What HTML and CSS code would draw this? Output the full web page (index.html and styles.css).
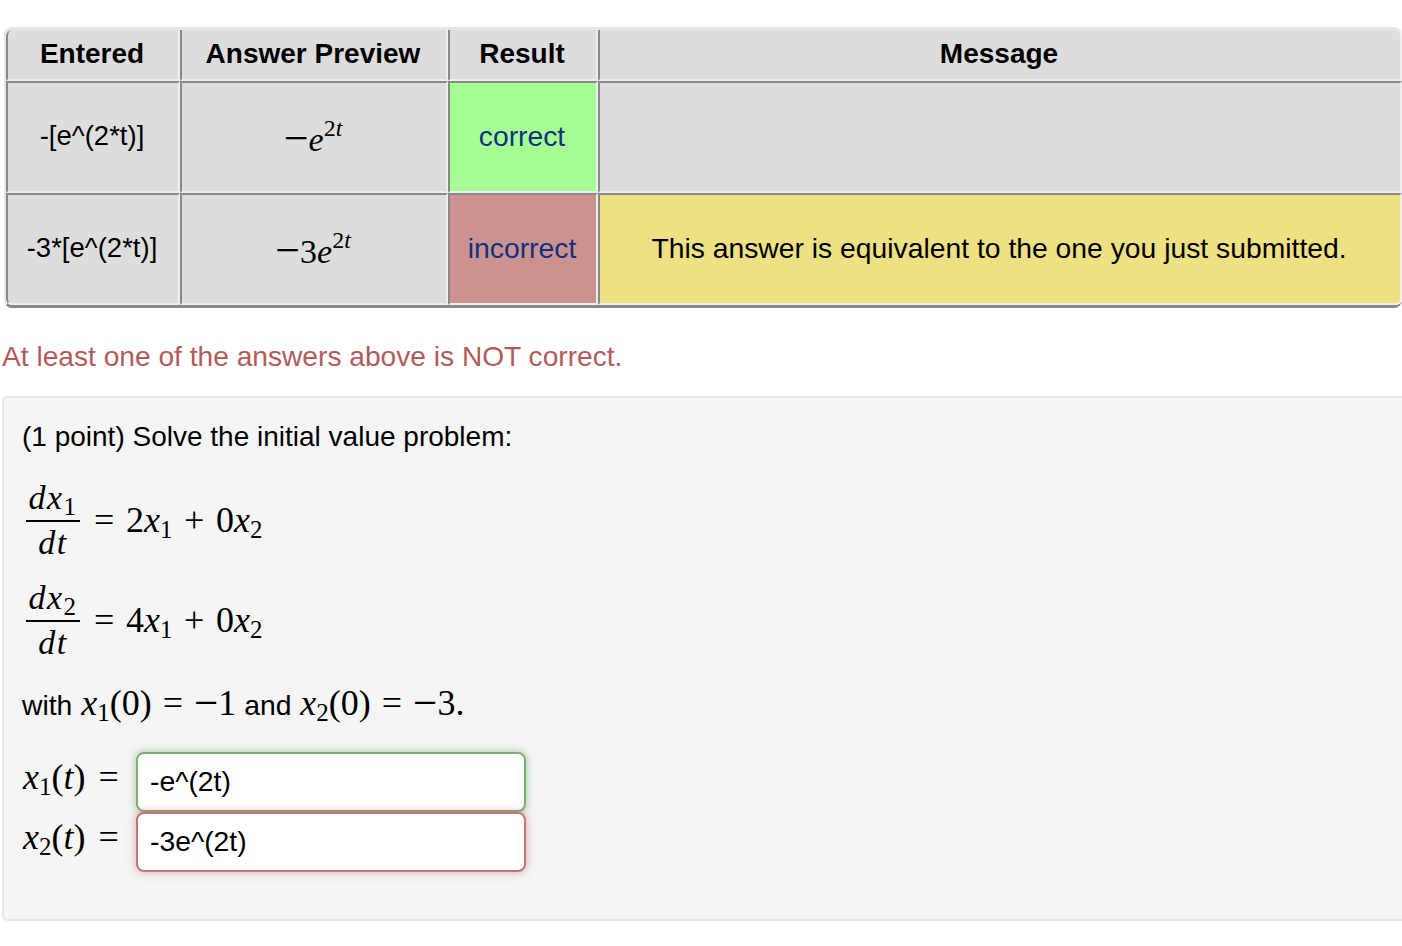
FILE: index.html
```html
<!DOCTYPE html>
<html lang="en">
<head>
<meta charset="utf-8">
<title>Attempt results</title>
<link rel="stylesheet" href="styles.css">
</head>
<body>
<table class="results">
  <thead>
    <tr>
      <th class="col-entered">Entered</th>
      <th class="col-preview">Answer Preview</th>
      <th class="col-result">Result</th>
      <th>Message</th>
    </tr>
  </thead>
  <tbody>
    <tr>
      <td class="entered">-[e^(2*t)]</td>
      <td class="math preview"><span class="minus">−</span><i>e</i><sup><span>2</span><i>t</i></sup></td>
      <td class="correct">correct</td>
      <td></td>
    </tr>
    <tr>
      <td class="entered">-3*[e^(2*t)]</td>
      <td class="math preview"><span class="minus">−</span>3<i>e</i><sup><span>2</span><i>t</i></sup></td>
      <td class="incorrect">incorrect</td>
      <td class="note">This answer is equivalent to the one you just submitted.</td>
    </tr>
  </tbody>
</table>

<p class="summary">At least one of the answers above is NOT correct.</p>

<section class="problem">
  <p class="intro">(1 point) Solve the initial value problem:</p>

  <div class="equation math">
    <span class="fraction">
      <span class="numerator"><i>dx</i><sub>1</sub></span>
      <span class="denominator"><i>dt</i></span>
    </span>
    <span class="rhs">= 2<i>x</i><sub>1</sub> + 0<i>x</i><sub>2</sub></span>
  </div>

  <div class="equation math">
    <span class="fraction">
      <span class="numerator"><i>dx</i><sub>2</sub></span>
      <span class="denominator"><i>dt</i></span>
    </span>
    <span class="rhs">= 4<i>x</i><sub>1</sub> + 0<i>x</i><sub>2</sub></span>
  </div>

  <p class="condition">with <span class="math"><i>x</i><sub>1</sub>(0) = <span class="minus">−</span>1</span> and <span class="math"><i>x</i><sub>2</sub>(0) = <span class="minus">−</span>3.</span></p>

  <div class="answers">
    <label class="answer">
      <span class="answer-label math"><i>x</i><sub>1</sub>(<i>t</i>) =</span>
      <input class="field field-ok" type="text" value="-e^(2t)">
    </label>
    <label class="answer">
      <span class="answer-label math"><i>x</i><sub>2</sub>(<i>t</i>) =</span>
      <input class="field field-bad" type="text" value="-3e^(2t)">
    </label>
  </div>
</section>
</body>
</html>
```

FILE: styles.css
```css
html, body {
  margin: 0;
  padding: 0;
  overflow: hidden;
  height: 946px;
  background: #fff;
}

body {
  font-family: "Liberation Sans", Arial, sans-serif;
  font-size: 28.3px;
  color: #000;
  padding-left: 4px;
  padding-top: 27px;
  box-sizing: border-box;
}

.results {
  width: 1398px;
  border-collapse: separate;
  border-spacing: 0;
  table-layout: fixed;
  border-top: 3px solid #e6e6e6;
  border-left: 2px solid #e6e6e6;
  border-bottom: 3px solid #888;
  border-right: 0;
  border-radius: 8px;
  text-align: center;
}

.results th,
.results td {
  background: #ddd;
  padding: 0 2px 2px 0;
  border-left: 2px solid #888;
  border-top: 2px solid #888;
  border-right: 2px solid #eee;
  border-bottom: 2px solid #eee;
}

.results th {
  height: 47px;
  border-top: 0;
  font-weight: bold;
  font-size: 28px;
}

.results td {
  height: 106px;
}

.results .entered {
  font-size: 27.5px;
}

.results th:first-child { border-top-left-radius: 6px; }
.results tbody tr:last-child td:first-child { border-bottom-left-radius: 6px; }
.results th:last-child { border-top-right-radius: 6px; }
.results tbody tr:last-child td:last-child { border-bottom-right-radius: 6px; }

.col-entered { width: 168px; }
.col-preview { width: 262px; }
.col-result { width: 144px; }

.results .correct {
  background: #a6ff93;
  color: #10307f;
}

.results .incorrect {
  background: #cc9290;
  color: #10307f;
}

.results .note {
  background: #ede184;
}

.math {
  font-family: "Liberation Serif", "Times New Roman", serif;
}

.minus {
  font-size: 1.2em;
  line-height: 0;
  vertical-align: -2px;
}

.results .preview {
  font-size: 34px;
  padding-top: 6px;
  padding-bottom: 0;
  height: 102px;
}

.preview .minus {
  font-size: 1.3em;
}

.preview sup {
  font-size: 24px;
  line-height: 0;
  vertical-align: 15px;
}

.summary {
  margin: 33px 0 0 -2px;
  line-height: 32px;
  font-size: 28.15px;
  color: #b25b5b;
}

.problem {
  margin: 23px 0 0 -2px;
  height: 525px;
  box-sizing: border-box;
  padding: 23px 0 0 18px;
  background: #f5f5f5;
  border: 2px solid #e6e6e6;
  border-right: 0;
  border-radius: 6px 0 0 6px;
}

.intro {
  margin: 0;
  line-height: 32px;
  font-size: 28px;
}

.equation {
  display: flex;
  align-items: center;
  font-size: 36px;
  height: 80px;
  margin-top: 29px;
  padding-left: 4px;
  line-height: 38px;
}

.equation + .equation {
  margin-top: 20px;
}

.fraction {
  display: flex;
  flex-direction: column;
  align-items: center;
  width: 54px;
  font-size: 34px;
  letter-spacing: 1.5px;
}

.numerator {
  align-self: stretch;
  text-align: center;
  border-bottom: 2px solid #000;
  height: 38px;
  line-height: 32px;
}

.denominator {
  height: 40px;
  line-height: 42px;
}

.rhs {
  margin-left: 14px;
  margin-bottom: 4px;
  white-space: pre-wrap;
  word-spacing: 2.6px;
}

.math sub {
  font-size: 25px;
  line-height: 0;
  vertical-align: -6px;
}

.condition {
  margin: 23px 0 0;
  line-height: 36px;
}

.condition .math {
  font-size: 36px;
  word-spacing: 2px;
  margin-left: 1px;
}

.answers {
  margin-top: 29px;
}

.answer {
  display: flex;
  align-items: center;
  height: 60px;
}

.answer-label {
  width: 113px;
  margin-left: 1px;
  font-size: 36px;
  margin-top: -10px;
  white-space: nowrap;
  word-spacing: 4px;
}

.field {
  width: 390px;
  height: 60px;
  box-sizing: border-box;
  padding: 0 12px 2px;
  font-family: "Liberation Sans", Arial, sans-serif;
  font-size: 28.3px;
  color: #000;
  background: #fff;
  border-radius: 8px;
  border: 2px solid #000;
}

.field-ok {
  border-color: #7fae78;
  box-shadow: 0 0 8px rgba(90, 150, 80, 0.55);
}

.field-bad {
  border-color: #c87474;
  box-shadow: 0 0 10px rgba(190, 90, 90, 0.5);
}
```
